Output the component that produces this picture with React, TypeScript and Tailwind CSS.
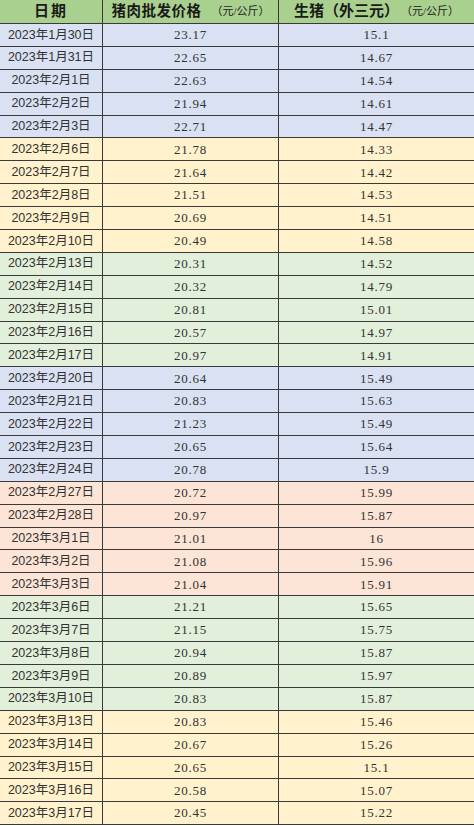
import React from "react";

const groups: { bg: string; rows: [string, string, string][] }[] = [
  {
    bg: "bg-[#d9e1f2]",
    rows: [
      ["2023年1月30日", "23.17", "15.1"],
      ["2023年1月31日", "22.65", "14.67"],
      ["2023年2月1日", "22.63", "14.54"],
      ["2023年2月2日", "21.94", "14.61"],
      ["2023年2月3日", "22.71", "14.47"],
    ],
  },
  {
    bg: "bg-[#fff2cc]",
    rows: [
      ["2023年2月6日", "21.78", "14.33"],
      ["2023年2月7日", "21.64", "14.42"],
      ["2023年2月8日", "21.51", "14.53"],
      ["2023年2月9日", "20.69", "14.51"],
      ["2023年2月10日", "20.49", "14.58"],
    ],
  },
  {
    bg: "bg-[#e2efda]",
    rows: [
      ["2023年2月13日", "20.31", "14.52"],
      ["2023年2月14日", "20.32", "14.79"],
      ["2023年2月15日", "20.81", "15.01"],
      ["2023年2月16日", "20.57", "14.97"],
      ["2023年2月17日", "20.97", "14.91"],
    ],
  },
  {
    bg: "bg-[#d9e1f2]",
    rows: [
      ["2023年2月20日", "20.64", "15.49"],
      ["2023年2月21日", "20.83", "15.63"],
      ["2023年2月22日", "21.23", "15.49"],
      ["2023年2月23日", "20.65", "15.64"],
      ["2023年2月24日", "20.78", "15.9"],
    ],
  },
  {
    bg: "bg-[#fce4d6]",
    rows: [
      ["2023年2月27日", "20.72", "15.99"],
      ["2023年2月28日", "20.97", "15.87"],
      ["2023年3月1日", "21.01", "16"],
      ["2023年3月2日", "21.08", "15.96"],
      ["2023年3月3日", "21.04", "15.91"],
    ],
  },
  {
    bg: "bg-[#e2efda]",
    rows: [
      ["2023年3月6日", "21.21", "15.65"],
      ["2023年3月7日", "21.15", "15.75"],
      ["2023年3月8日", "20.94", "15.87"],
      ["2023年3月9日", "20.89", "15.97"],
      ["2023年3月10日", "20.83", "15.87"],
    ],
  },
  {
    bg: "bg-[#fff2cc]",
    rows: [
      ["2023年3月13日", "20.83", "15.46"],
      ["2023年3月14日", "20.67", "15.26"],
      ["2023年3月15日", "20.65", "15.1"],
      ["2023年3月16日", "20.58", "15.07"],
      ["2023年3月17日", "20.45", "15.22"],
    ],
  },
];

const sans = "font-['Liberation_Sans','Noto_Sans_CJK_SC',sans-serif]";
const serif = "font-['Liberation_Serif','Noto_Sans_CJK_SC',serif]";

export default function App() {
  return (
    <div className="w-[474px] h-[827px] bg-white overflow-hidden">
      <div className="flex h-[24px] bg-[#a9d08e] border-b border-[#3a3a3a] text-[#1a1a1a]">
        <div className={`w-[103px] shrink-0 border-r border-[#3a3a3a] flex items-center justify-center font-bold text-[15px] tracking-[2px] ${serif}`}>
          日期
        </div>
        <div className={`w-[176px] shrink-0 border-r border-[#3a3a3a] flex items-center justify-center ${serif}`}>
          <span className="font-bold text-[14.5px] tracking-[0.5px]">猪肉批发价格</span>
          <span className="text-[11px] ml-[10px]">（元/公斤）</span>
        </div>
        <div className={`flex-1 flex items-center justify-center ${serif}`}>
          <span className="font-bold text-[15px]">生猪（外三元）</span>
          <span className="text-[11px] ml-[2px]">（元/公斤）</span>
        </div>
      </div>
      {groups.map((g, gi) =>
        g.rows.map((r, ri) => (
          <div
            key={`${gi}-${ri}`}
            className={`flex h-[22.9px] border-b border-[#3a3a3a] ${g.bg} text-[#333333]`}
          >
            <div className={`w-[103px] shrink-0 border-r border-[#3a3a3a] flex items-center justify-center text-[12.5px] ${sans}`}>
              {r[0]}
            </div>
            <div className={`w-[176px] shrink-0 border-r border-[#3a3a3a] flex items-center justify-center text-[13px] tracking-[0.8px] ${serif}`}>
              {r[1]}
            </div>
            <div className={`flex-1 flex items-center justify-center text-[13px] tracking-[0.8px] ${serif}`}>
              {r[2]}
            </div>
          </div>
        ))
      )}
    </div>
  );
}
